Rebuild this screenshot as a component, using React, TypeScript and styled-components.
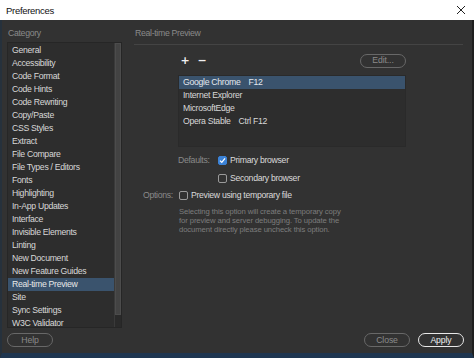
import React from "react";
import styled, { createGlobalStyle } from "styled-components";

const Global = createGlobalStyle`
  html, body { margin: 0; padding: 0; background: #323232; }
  body { font-family: "Liberation Sans", Arial, sans-serif; }
  * { box-sizing: border-box; }
`;

const Window = styled.div`
  width: 474px;
  height: 358px;
  display: flex;
  flex-direction: column;
  overflow: hidden;
  font-size: 8.7px;
  letter-spacing: -0.3px;
  color: #dadada;
`;

const TitleBar = styled.div`
  height: 21px;
  background: #ffffff;
  display: flex;
  align-items: center;
  justify-content: space-between;
  padding: 0 8px 0 6px;
  color: #111;
  font-size: 9.5px;
`;

const Body = styled.div`
  flex: 1;
  display: flex;
  flex-direction: column;
  background: #323232;
  border-left: 2px solid #26313c;
  border-right: 2px solid #1f1f1f;
  border-bottom: 5px solid #1f3650;
`;

const Main = styled.div`
  flex: 1;
  display: grid;
  grid-template-columns: 115px 1fr;
  column-gap: 12px;
  padding: 6px 9px 0 5px;
`;

const Column = styled.div`
  display: flex;
  flex-direction: column;
  min-height: 0;
`;

const Heading = styled.div`
  height: 16px;
  line-height: 14px;
  color: #8a8a8a;
  padding-left: 1px;
`;

const ListFrame = styled.div`
  height: 286px;
  display: flex;
  background: #2d2d2d;
  border: 1px solid #262626;
`;

const CatList = styled.div`
  flex: 1;
  padding-top: 1px;
`;

const CatItem = styled.div<{ $selected?: boolean }>`
  height: 13px;
  line-height: 13px;
  padding-left: 4px;
  white-space: nowrap;
  color: ${(p) => (p.$selected ? "#e8e8e8" : "#d8d8d8")};
  background: ${(p) => (p.$selected ? "#3a536d" : "transparent")};
`;

const ScrollTrack = styled.div`
  width: 7px;
  background: #2a2a2a;
  border-left: 1px solid #3a3a3a;
`;

const ScrollThumb = styled.div`
  height: 272px;
  background: #434343;
  border: 1px solid #4c4c4c;
`;

const Rule = styled.div`
  height: 1px;
  background: #444444;
  margin-top: 2px;
`;

const Content = styled.div`
  padding-left: 44px;
  padding-top: 8px;
  width: 272px;
`;

const Toolbar = styled.div`
  display: flex;
  align-items: center;
  gap: 5px;
  padding-left: 1px;
  height: 15px;
  margin-bottom: 7px;
`;

const IconBtn = styled.span`
  width: 12px;
  font-family: "DejaVu Sans", sans-serif;
  font-size: 11px;
  font-weight: bold;
  color: #f0f0f0;
  line-height: 12px;
  text-align: center;
`;

const Spacer = styled.div`
  flex: 1;
`;

const Pill = styled.button<{ $primary?: boolean }>`
  width: 46px;
  height: 14px;
  border-radius: 7px;
  background: transparent;
  border: ${(p) => (p.$primary ? "1.5px solid #e8e8e8" : "1px solid #686868")};
  color: ${(p) => (p.$primary ? "#eeeeee" : "#8a8a8a")};
  font-family: inherit;
  font-size: 8.7px;
  letter-spacing: -0.1px;
  line-height: 11px;
  padding: 0;
`;

const BrowserList = styled.div`
  height: 72px;
  background: #2d2d2d;
  border: 1px solid #2a2a2a;
`;

const BrowserRow = styled.div<{ $selected?: boolean }>`
  height: 13px;
  line-height: 13px;
  padding-left: 4px;
  display: flex;
  white-space: nowrap;
  background: ${(p) => (p.$selected ? "#3a536d" : "transparent")};
  color: ${(p) => (p.$selected ? "#e4e8ee" : "#d8d8d8")};
`;

const Key = styled.span<{ $gap: number }>`
  margin-left: ${(p) => p.$gap}px;
`;

const FormRow = styled.div<{ $indent: number; $top: number }>`
  display: flex;
  align-items: center;
  margin-left: ${(p) => p.$indent}px;
  margin-top: ${(p) => p.$top}px;
  height: 12px;
  white-space: nowrap;
`;

const Label = styled.span<{ $width: number }>`
  width: ${(p) => p.$width}px;
  color: #8a8a8a;
`;

const Box = styled.span<{ $checked?: boolean }>`
  width: 9px;
  height: 9px;
  border-radius: 2px;
  margin-right: 3px;
  display: inline-flex;
  align-items: center;
  justify-content: center;
  border: 1px solid ${(p) => (p.$checked ? "#3b82d6" : "#9a9a9a")};
  background: ${(p) => (p.$checked ? "#3b82d6" : "transparent")};
`;

const Desc = styled.div`
  margin-left: 45px;
  margin-top: 6px;
  font-size: 7.7px;
  letter-spacing: -0.1px;
  line-height: 9px;
  color: #7d7d7d;
  white-space: nowrap;
`;

const Footer = styled.div`
  height: 25px;
  display: flex;
  align-items: flex-start;
  padding: 5px 8px 0 5px;
  gap: 8px;
`;

const categories = [
  "General",
  "Accessibility",
  "Code Format",
  "Code Hints",
  "Code Rewriting",
  "Copy/Paste",
  "CSS Styles",
  "Extract",
  "File Compare",
  "File Types / Editors",
  "Fonts",
  "Highlighting",
  "In-App Updates",
  "Interface",
  "Invisible Elements",
  "Linting",
  "New Document",
  "New Feature Guides",
  "Real-time Preview",
  "Site",
  "Sync Settings",
  "W3C Validator",
];

const Check = () => (
  <svg width="7" height="7" viewBox="0 0 7 7">
    <path d="M1 3.6 L2.8 5.4 L6 1.4" stroke="#fff" strokeWidth="1.3" fill="none" />
  </svg>
);

export default function App() {
  return (
    <>
      <Global />
      <Window>
        <TitleBar>
          <span>Preferences</span>
          <svg width="10" height="10" viewBox="0 0 10 10">
            <path d="M1 1 L9 9 M9 1 L1 9" stroke="#222" strokeWidth="1" />
          </svg>
        </TitleBar>
        <Body>
          <Main>
            <Column>
              <Heading>Category</Heading>
              <ListFrame>
                <CatList>
                  {categories.map((c) => (
                    <CatItem key={c} $selected={c === "Real-time Preview"}>
                      {c}
                    </CatItem>
                  ))}
                </CatList>
                <ScrollTrack>
                  <ScrollThumb />
                </ScrollTrack>
              </ListFrame>
            </Column>
            <Column>
              <Heading>Real-time Preview</Heading>
              <Rule />
              <Content>
                <Toolbar>
                  <IconBtn>+</IconBtn>
                  <IconBtn>−</IconBtn>
                  <Spacer />
                  <Pill>Edit...</Pill>
                </Toolbar>
                <BrowserList>
                  <BrowserRow $selected>
                    Google Chrome<Key $gap={8}>F12</Key>
                  </BrowserRow>
                  <BrowserRow>Internet Explorer</BrowserRow>
                  <BrowserRow>MicrosoftEdge</BrowserRow>
                  <BrowserRow>
                    Opera Stable<Key $gap={8}>Ctrl F12</Key>
                  </BrowserRow>
                </BrowserList>
              </Content>
              <FormRow $indent={44} $top={7}>
                <Label $width={40}>Defaults:</Label>
                <Box $checked>
                  <Check />
                </Box>
                Primary browser
              </FormRow>
              <FormRow $indent={84} $top={6}>
                <Box />
                Secondary browser
              </FormRow>
              <FormRow $indent={9} $top={5}>
                <Label $width={36}>Options:</Label>
                <Box />
                Preview using temporary file
              </FormRow>
              <Desc>
                Selecting this option will create a temporary copy
                <br />
                for preview and server debugging. To update the
                <br />
                document directly please uncheck this option.
              </Desc>
            </Column>
          </Main>
          <Footer>
            <Pill>Help</Pill>
            <Spacer />
            <Pill>Close</Pill>
            <Pill $primary>Apply</Pill>
          </Footer>
        </Body>
      </Window>
    </>
  );
}
